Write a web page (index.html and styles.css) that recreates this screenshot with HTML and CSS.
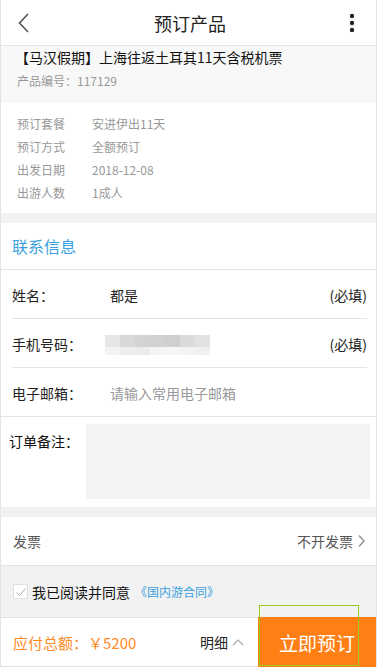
FILE: index.html
```html
<!DOCTYPE html>
<html lang="zh-CN">
<head>
<meta charset="utf-8">
<title>预订产品</title>
<link rel="stylesheet" href="styles.css">
</head>
<body>
<div class="page">
  <header class="topbar">
    <svg class="back" width="14" height="22" viewBox="0 0 14 22"><path d="M11 2 L2.5 11 L11 20" fill="none" stroke="#555" stroke-width="1.6"/></svg>
    <h1 class="title">预订产品</h1>
    <svg class="more" width="6" height="22" viewBox="0 0 6 22"><circle cx="3" cy="4" r="2.2" fill="#222"/><circle cx="3" cy="11" r="2.2" fill="#222"/><circle cx="3" cy="18" r="2.2" fill="#222"/></svg>
  </header>

  <section class="product">
    <div class="product-name">【马汉假期】上海往返土耳其11天含税机票</div>
    <div class="product-code">产品编号：117129</div>
  </section>

  <section class="details">
    <div class="drow"><span class="dlabel">预订套餐</span><span>安进伊出11天</span></div>
    <div class="drow"><span class="dlabel">预订方式</span><span>全额预订</span></div>
    <div class="drow"><span class="dlabel">出发日期</span><span>2018-12-08</span></div>
    <div class="drow"><span class="dlabel">出游人数</span><span>1成人</span></div>
  </section>

  <section class="contact">
    <div class="contact-title">联系信息</div>
    <div class="field"><span class="flabel">姓名：</span><span class="fvalue">都是</span><span class="req">(必填)</span></div>
    <div class="field"><span class="flabel">手机号码：</span><span class="fvalue"><span class="blur"><i class="c1"></i><i class="c2"></i><i class="c3"></i><i class="c4"></i><i class="c5"></i><i class="c6"></i><i class="c7"></i><i class="d1"></i><i class="d2"></i><i class="d3"></i><i class="d4"></i><i class="d5"></i><i class="d6"></i><i class="d7"></i></span></span><span class="req">(必填)</span></div>
    <div class="field last"><span class="flabel">电子邮箱：</span><span class="fvalue placeholder">请输入常用电子邮箱</span></div>
    <div class="remark">
      <span class="rlabel">订单备注：</span>
      <div class="rbox"></div>
    </div>
  </section>

  <section class="invoice">
    <span class="ilabel">发票</span>
    <span class="ivalue">不开发票<svg width="9" height="14" viewBox="0 0 9 14"><path d="M2 1.5 L7 7 L2 12.5" fill="none" stroke="#999" stroke-width="1.6"/></svg></span>
  </section>

  <div class="agree">
    <span class="check"><svg width="12" height="12" viewBox="0 0 12 12"><path d="M1.5 6.5 L4.5 9.5 L10.5 2.5" fill="none" stroke="#aaa" stroke-width="1"/></svg></span>
    <span class="agree-text">我已阅读并同意</span>
    <span class="contract">《国内游合同》</span>
  </div>

  <footer class="bottombar">
    <span class="total">应付总额：￥5200</span>
    <span class="detail">明细<svg width="12" height="8" viewBox="0 0 12 8"><path d="M1 7 L6 2 L11 7" fill="none" stroke="#aaa" stroke-width="1.2"/></svg></span>
    <button class="submit">立即预订</button>
    <div class="outline"></div>
  </footer>
</div>
</body>
</html>
```

FILE: styles.css
```css
* { box-sizing: border-box; }
html, body { margin: 0; padding: 0; background: #fff; }
body {
  font-family: "Noto Sans CJK SC", "Noto Sans", sans-serif;
  color: #333;
}
.page {
  width: 377px;
  height: 667px;
  border-left: 1px solid #e4e4e4;
  border-right: 1px solid #e4e4e4;
  background: #f2f2f2;
  display: flex;
  flex-direction: column;
  overflow: hidden;
}
.topbar {
  height: 46px;
  flex: none;
  background: #fff;
  border-bottom: 1px solid #e3e3e3;
  display: flex;
  align-items: center;
  justify-content: space-between;
  padding: 0 21px 0 16px;
}
.title {
  margin: 0;
  font-size: 18px;
  font-weight: normal;
  color: #222;
  line-height: 24px;
}
.back { display: block; margin-top: 1px; }
.more { display: block; margin-top: 1px; }

.product {
  flex: none;
  height: 57px;
  background: #f8f8f8;
  padding: 0 0 0 14px;
}
.product-name {
  font-size: 14px;
  line-height: 22px;
  color: #111;
}
.product-code {
  margin-top: 3px;
  font-size: 12px;
  line-height: 20px;
  color: #999;
  padding-left: 2px;
}

.details {
  flex: none;
  height: 110px;
  background: #fff;
  padding: 9px 0 0 16px;
  font-size: 12px;
  color: #999;
}
.drow {
  display: flex;
  line-height: 23px;
  height: 23px;
}
.dlabel { width: 75px; }

.contact {
  flex: none;
  margin-top: 10px;
  background: #fff;
}
.contact-title {
  height: 47px;
  line-height: 46px;
  border-bottom: 1px solid #e3e3e3;
  padding-left: 11px;
  font-size: 16px;
  color: #3a9fe0;
}
.field {
  height: 49px;
  margin: 0 9px 0 11px;
  border-bottom: 1px solid #e3e3e3;
  display: flex;
  align-items: center;
  font-size: 14px;
  color: #222;
  padding-top: 2px;
}
.field.last { border-bottom: none; height: 48px; }
.flabel { width: 98px; flex: none; }
.fvalue { flex: 1; }
.placeholder { color: #999; }
.req { flex: none; }
.blur {
  display: grid;
  grid-template-columns: 15px 15px 15px 15px 15px 15px 15px;
  grid-template-rows: 12px 8px;
  width: 105px;
  margin-left: -5px;
  margin-top: 2px;
}
.blur i { display: block; }
.c1 { background: #e6e6e6; }
.c2 { background: #d8d8d8; }
.c3 { background: #d3d3d3; }
.c4 { background: #d1d1d1; }
.c5 { background: #d0cfcf; }
.c6 { background: #dadada; }
.c7 { background: #e2e2e2; }
.d1 { background: #f3f3f3; }
.d2 { background: #eeeeee; }
.d3 { background: #ececec; }
.d4 { background: #f4f4f4; }
.d5 { background: #f6f6f6; }
.d6 { background: #f3f3f3; }
.d7 { background: #f0f0f0; }

.remark {
  height: 91px;
  border-top: 1px solid #e3e3e3;
  display: flex;
  padding: 7px 6px 0 8px;
}
.rlabel {
  width: 77px;
  flex: none;
  font-size: 14px;
  line-height: 20px;
  color: #111;
  padding-top: 7px;
}
.rbox {
  flex: 1;
  height: 75px;
  background: #f4f4f4;
}

.invoice {
  flex: none;
  margin-top: 10px;
  height: 49px;
  background: #fff;
  border-bottom: 1px solid #e3e3e3;
  display: flex;
  align-items: center;
  justify-content: space-between;
  padding: 0 10px 0 12px;
  font-size: 14px;
  color: #555;
}
.ivalue {
  display: flex;
  align-items: center;
  gap: 4px;
  color: #555;
}
.ivalue svg { display: block; }

.agree {
  flex: none;
  height: 51px;
  display: flex;
  align-items: center;
  padding: 0 0 0 12px;
}
.check {
  width: 15px;
  height: 15px;
  background: #fff;
  border: 1px solid #e0e0e0;
  display: flex;
  align-items: center;
  justify-content: center;
  margin-right: 4px;
}
.check svg { display: block; }
.agree-text { font-size: 14px; color: #111; }
.contract { font-size: 12px; color: #3a9fe0; margin-left: 5px; }

.bottombar {
  flex: none;
  position: relative;
  height: 50px;
  background: #fff;
  border-top: 1px solid #e3e3e3;
  border-bottom: 1px solid #e3e3e3;
  display: flex;
  align-items: center;
  padding-left: 12px;
}
.total {
  font-size: 15px;
  color: #ff8a26;
  width: 187px;
}
.detail {
  font-size: 14px;
  color: #222;
  display: flex;
  align-items: center;
  gap: 4px;
  width: 58px;
}
.detail svg { display: block; }
.submit {
  align-self: stretch;
  flex: 1;
  margin: -1px 0 -1px 0;
  border: none;
  background: #ff7f14;
  color: #fff;
  font-family: inherit;
  font-size: 19px;
  padding: 0;
}
.outline {
  position: absolute;
  left: 258px;
  top: -13px;
  width: 100px;
  height: 61px;
  border: 1px solid #9acd1e;
  pointer-events: none;
}
```
